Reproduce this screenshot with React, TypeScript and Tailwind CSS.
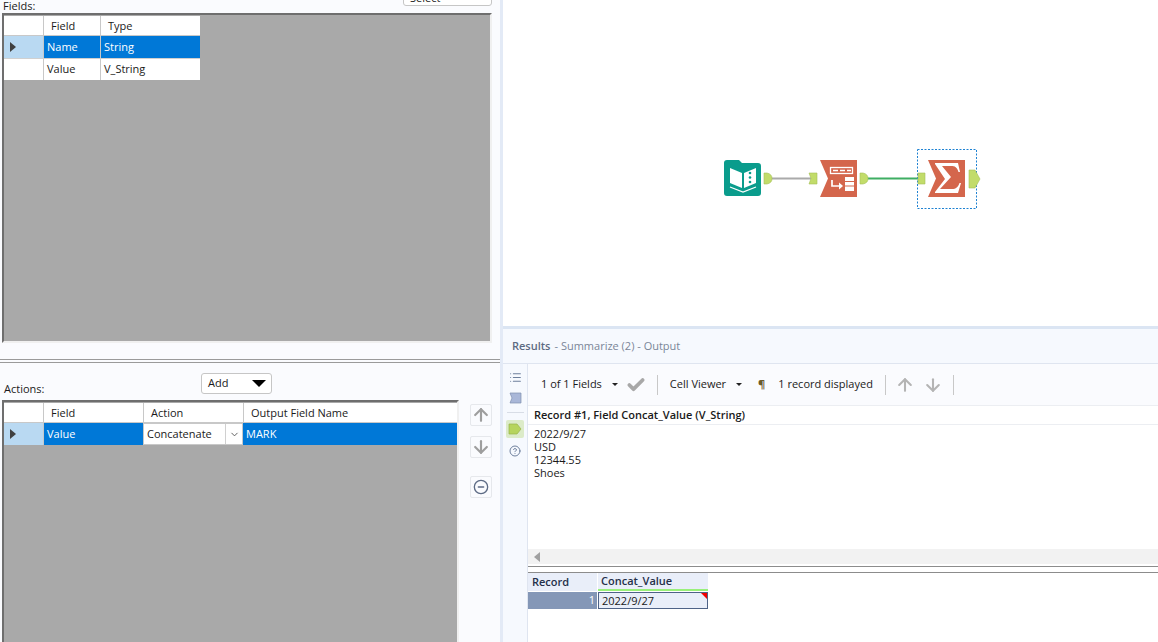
import { ArrowDown, ArrowUp, Check, ChevronDown, CircleHelp, CircleMinus, List } from 'lucide-react';
import type { ReactNode } from 'react';

const font = 'font-["Open_Sans","Noto_Sans",sans-serif]';

function RowMarker() {
  return (
    <div className="flex h-full w-[39px] shrink-0 items-center bg-[#b9d9f2] pl-[6px]">
      <div className="h-0 w-0 border-y-[5px] border-l-[6px] border-y-transparent border-l-[#404040]" />
    </div>
  );
}

function HeaderCell({ width, children }: { width: string; children?: ReactNode }) {
  return (
    <div className={`flex h-full shrink-0 items-center border-l border-[#c8c8c8] pl-[7px] pt-px ${width}`}>{children}</div>
  );
}

function FieldsGrid() {
  return (
    <div className="ml-[2px] h-[330px] w-[490px] border-2 border-[#6e6e6e] border-r-[#f0f0f0] border-b-[#f0f0f0] bg-[#a9a9a9] pt-px">
      <div className="w-[196px] bg-white text-[11px] text-[#1a1a1a]">
        <div className="flex h-[20px] border-b border-[#c8c8c8]">
          <div className="w-[39px] shrink-0" />
          <HeaderCell width="w-[57px]">Field</HeaderCell>
          <HeaderCell width="w-[100px]">Type</HeaderCell>
        </div>
        <div className="flex h-[22px] text-white">
          <RowMarker />
          <div className="flex w-[57px] shrink-0 items-center border-l border-[#c8c8c8] bg-[#0078d7] pl-[3px]">Name</div>
          <div className="flex w-[100px] shrink-0 items-center border-l border-[#c8c8c8] bg-[#0078d7] pl-[3px]">String</div>
        </div>
        <div className="flex h-[22px] border-t border-[#d0d0d0]">
          <div className="w-[39px] shrink-0" />
          <div className="flex w-[57px] shrink-0 items-center border-l border-[#c8c8c8] pl-[3px]">Value</div>
          <div className="flex w-[100px] shrink-0 items-center border-l border-[#c8c8c8] pl-[3px]">V_String</div>
        </div>
      </div>
    </div>
  );
}

function ActionsGrid() {
  return (
    <div className="h-[243px] w-[457px] shrink-0 border-2 border-b-0 border-[#6e6e6e] border-r-[#f0f0f0] bg-[#a9a9a9] pt-px">
      <div className="w-[453px] bg-white text-[11px] text-[#1a1a1a]">
        <div className="flex h-[20px] border-b border-[#c8c8c8]">
          <div className="w-[39px] shrink-0" />
          <HeaderCell width="w-[100px]">Field</HeaderCell>
          <HeaderCell width="w-[100px]">Action</HeaderCell>
          <HeaderCell width="w-[214px]">Output Field Name</HeaderCell>
        </div>
        <div className="flex h-[22px]">
          <RowMarker />
          <div className="flex w-[100px] shrink-0 items-center border-l border-[#c8c8c8] bg-[#0078d7] pl-[3px] text-white">Value</div>
          <div className="flex w-[100px] shrink-0 items-center justify-between border border-[#c8c8c8] bg-white pl-[3px]">
            Concatenate
            <div className="flex h-full w-[17px] items-center justify-center border-l border-[#d0d0d0]">
              <ChevronDown size={11} className="text-[#555]" />
            </div>
          </div>
          <div className="flex w-[214px] shrink-0 items-center bg-[#0078d7] pl-[3px] text-white">MARK</div>
        </div>
      </div>
    </div>
  );
}

function SideButton({ children, className = '' }: { children: ReactNode; className?: string }) {
  return (
    <div className={`flex h-[22px] w-[22px] items-center justify-center rounded-[2px] border border-[#e6e8ec] ${className}`}>
      {children}
    </div>
  );
}

function LeftPanel() {
  return (
    <div className="flex h-full w-[500px] shrink-0 flex-col bg-[#fafbfe]">
      <div className="relative h-[13px] shrink-0 text-[11px] leading-[12px] text-[#1a1a1a]">
        <span className="pl-[3px]">Fields:</span>
        <div className="absolute -top-[10px] left-[403px] h-[16px] w-[89px] rounded-[3px] border border-[#c6c6c6] bg-white pl-[6px] leading-[13px]">
          Select
        </div>
      </div>
      <FieldsGrid />
      <div className="mt-[16px] h-[4px] shrink-0 border-y border-[#9a9a9a]" />
      <div className="relative h-[37px] shrink-0 text-[11px] text-[#1a1a1a]">
        <span className="absolute left-[4px] top-[18px]">Actions:</span>
        <div className="absolute left-[201px] top-[10px] flex h-[21px] w-[71px] items-center justify-between rounded-[3px] border border-[#c6c6c6] bg-white pl-[6px] pr-[5px]">
          Add
          <div className="h-0 w-0 border-x-[7px] border-t-[7px] border-x-transparent border-t-black" />
        </div>
      </div>
      <div className="flex min-h-0 flex-1 pl-[2px]">
        <ActionsGrid />
        <div className="ml-[11px] mt-[4px] flex flex-col">
          <SideButton><ArrowUp size={22} strokeWidth={2.6} className="text-[#9e9e9e]" /></SideButton>
          <SideButton className="mt-[10px]"><ArrowDown size={22} strokeWidth={2.6} className="text-[#9e9e9e]" /></SideButton>
          <SideButton className="mt-[18px] border-[#c8cacd]"><CircleMinus size={16} className="text-[#5d6b85]" /></SideButton>
        </div>
      </div>
    </div>
  );
}

function Workflow() {
  return (
    <svg width="270" height="70" viewBox="0 0 270 70" className="absolute left-[217px] top-[146px]">
      {/* connections */}
      <line x1="50" y1="32.5" x2="92" y2="32.5" stroke="#aaaaaa" strokeWidth="2" />
      <line x1="146" y1="32.5" x2="202" y2="32.5" stroke="#3fae63" strokeWidth="2" />

      {/* input tool */}
      <path d="M4 17 q0-3 3-3 h12 l3 3 h16 q3 0 3 3 v27 q0 3-3 3 H7 q-3 0-3-3z" fill="#0a9c8c" />
      <path d="M10 22 l12 5 v15 l-12-5z" fill="#fff" />
      <path d="M24 27 l12-5 v15 l-12 5z" fill="#fff" />
      <circle cx="30" cy="27" r="1.3" fill="#0a9c8c" />
      <circle cx="30" cy="31.5" r="1.3" fill="#0a9c8c" />
      <circle cx="30" cy="36" r="1.3" fill="#0a9c8c" />
      <path d="M10 41 l13 5 l13-5" fill="none" stroke="#fff" strokeWidth="1.3" />
      <path d="M44 27 h3 q5 1 5 5.5 t-5 5.5 h-3z" fill="#c2dc6a" stroke="#a5bf58" strokeWidth="0.6" />

      {/* cross tab tool */}
      <path d="M89 27 h8 v11 h-8 l2-5.5z" fill="#c2dc6a" stroke="#a5bf58" strokeWidth="0.6" />
      <path d="M100 14 h37 v37 h-37 l8-18.5z" fill="#d4664c" />
      <rect x="110.5" y="21.5" width="22" height="6" fill="none" stroke="#fff" strokeWidth="1.3" />
      <path d="M113 24.5 h5 M120 24.5 h5 M127 24.5 h4" stroke="#fff" strokeWidth="1.3" />
      <path d="M112 34 v6 h8" fill="none" stroke="#fff" strokeWidth="1.7" />
      <path d="M119 36.5 l4 3.5-4 3.5z" fill="#fff" />
      <rect x="125" y="31" width="9" height="14" fill="#fff" />
      <path d="M125 35.5 h9 M125 40 h9" stroke="#d4664c" strokeWidth="1" />
      <path d="M140 27 h3 q5 1 5 5.5 t-5 5.5 h-3z" fill="#c2dc6a" stroke="#a5bf58" strokeWidth="0.6" />

      {/* summarize tool, selected */}
      <rect x="197.5" y="3.5" width="59" height="59" fill="none" stroke="#1e82d2" strokeWidth="1" strokeDasharray="2 1.5" />
      <path d="M198 27 h7 v11 h-7z" fill="#c2dc6a" stroke="#a5bf58" strokeWidth="0.6" />
      <path d="M208 14 h37 v37 h-37 l8-18.5z" fill="#d4664c" />
      <path d="M215 17 H238 L240 26 H238.5 C237 21 235 20 231 20 H222 L231 31 L220 43 H232 C236 43 238 41 239.5 37 H241 L238 47 H215 V46 L225 33 L215 18z" fill="#fff" />
      <path d="M249 24 h6 l5 9-5 9 h-6z" fill="#c2dc6a" stroke="#a5bf58" strokeWidth="0.6" />
    </svg>
  );
}

function Rail() {
  return (
    <div className="flex w-[25px] shrink-0 flex-col items-center border-r border-[#dfe5f0] bg-[#f6f9fe] pt-[7px]">
      <List size={13} className="text-[#6d7f9c]" />
      <svg width="13" height="12" viewBox="0 0 13 12" className="mt-[8px]">
        <path d="M1 1 h11 v10 h-11 l2-5z" fill="#a9b7d8" stroke="#7f8fb0" strokeWidth="0.7" />
      </svg>
      <div className="mt-[8px] h-px w-[17px] bg-[#d8dde6]" />
      <div className="mt-[7px] flex h-[18px] w-[18px] items-center justify-center rounded-[2px] bg-[#dcebc8]">
        <svg width="14" height="12" viewBox="0 0 14 12">
          <path d="M1 1 h8 l4 5-4 5 h-8z" fill="#b6d45c" stroke="#98b54c" strokeWidth="0.7" />
        </svg>
      </div>
      <CircleHelp size={12} className="mt-[7px] text-[#6d7f9c]" />
    </div>
  );
}

function Caret() {
  return <div className="h-0 w-0 border-x-[3px] border-t-[3px] border-x-transparent border-t-[#222]" />;
}

function Toolbar() {
  return (
    <div className="flex h-[41px] shrink-0 items-center bg-[#fafbfe] text-[11px] text-[#1a1a1a]">
      <span className="ml-[13px]">1 of 1 Fields</span>
      <div className="ml-[10px]"><Caret /></div>
      <Check size={20} strokeWidth={4.5} className="ml-[8px] text-[#a8a8a8]" />
      <div className="ml-[11px] h-[20px] w-px bg-[#c8c8c8]" />
      <span className="ml-[12px]">Cell Viewer</span>
      <div className="ml-[10px]"><Caret /></div>
      <span className="ml-[16px] font-bold text-[#6b5a2a]">¶</span>
      <span className="ml-[13px]">1 record displayed</span>
      <div className="ml-[12px] h-[20px] w-px bg-[#c8c8c8]" />
      <ArrowUp size={20} strokeWidth={2.5} className="ml-[9px] text-[#b4b4b4]" />
      <ArrowDown size={20} strokeWidth={2.5} className="ml-[8px] text-[#b4b4b4]" />
      <div className="ml-[10px] h-[20px] w-px bg-[#c8c8c8]" />
    </div>
  );
}

function RecordTable() {
  return (
    <div className="flex-1 bg-white text-[11px] text-[#1a1a1a]">
      <div className="flex h-[18px] gap-px font-semibold text-[#24304a]">
        <div className="flex w-[69px] items-center bg-[#e9eef9] pl-[4px]">Record</div>
        <div className="flex w-[110px] items-center border-b-2 border-[#98f07a] bg-[#e9eef9] pl-[3px] pt-px">Concat_Value</div>
      </div>
      <div className="mt-px flex h-[17px] gap-px">
        <div className="flex w-[69px] items-center justify-end bg-[#8497b7] pr-[2px] text-white">1</div>
        <div className="relative flex w-[110px] items-center border border-[#4e6287] bg-[#e9eef9] pl-[3px] pt-px">
          2022/9/27
          <div className="absolute right-0 top-0 h-0 w-0 border-l-[6px] border-t-[6px] border-l-transparent border-t-[#f00000]" />
        </div>
      </div>
    </div>
  );
}

function ResultsPanel() {
  return (
    <div className="flex h-[316px] shrink-0 flex-col border-t-[3px] border-[#dbe5f3]">
      <div className="flex h-[35px] shrink-0 items-center border-b border-[#dfe5f0] bg-[#f6f9fe] pl-[9px] text-[11px] text-[#7a8698]">
        <span className="font-semibold text-[#5d6b82]">Results</span>
        <span className="ml-[4px]">- Summarize (2) - Output</span>
      </div>
      <div className="flex min-h-0 flex-1">
        <Rail />
        <div className="flex min-w-0 flex-1 flex-col">
          <Toolbar />
          <div className="flex h-[20px] shrink-0 items-center border-y border-[#eceef2] bg-white pl-[6px] text-[11px] font-semibold text-[#1a1a1a]">
            Record #1, Field Concat_Value (V_String)
          </div>
          <div className="h-[124px] shrink-0 bg-white pl-[6px] pt-[2px] text-[11px] leading-[13px] text-[#1a1a1a]">
            <div>2022/9/27</div>
            <div>USD</div>
            <div>12344.55</div>
            <div>Shoes</div>
          </div>
          <div className="flex h-[15px] shrink-0 items-center bg-[#f2f2f2] pl-[6px]">
            <div className="h-0 w-0 border-y-[5px] border-r-[6px] border-y-transparent border-r-[#a0a0a0]" />
          </div>
          <div className="mt-[2px] h-[7px] shrink-0 border-y border-[#8c8c8c] bg-white" />
          <RecordTable />
        </div>
      </div>
    </div>
  );
}

export default function App() {
  return (
    <div className={`flex h-[642px] w-[1158px] overflow-hidden bg-white ${font}`}>
      <LeftPanel />
      <div className="w-[3px] shrink-0 bg-[#e3eaf6]" />
      <div className="flex min-w-0 flex-1 flex-col">
        <div className="relative min-h-0 flex-1 bg-white">
          <Workflow />
        </div>
        <ResultsPanel />
      </div>
    </div>
  );
}
